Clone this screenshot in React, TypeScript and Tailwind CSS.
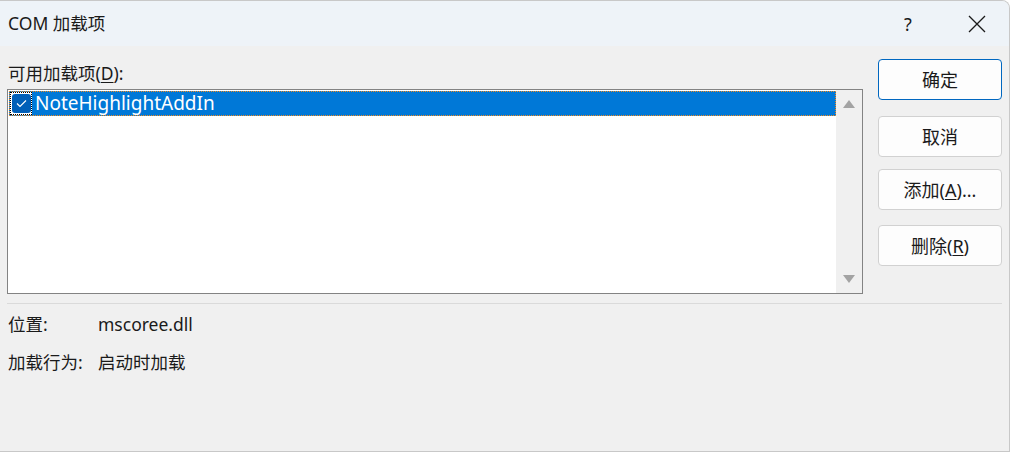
import React from "react";

const font = "font-['Segoe_UI','Noto_Sans','Noto_Sans_CJK_SC',sans-serif]";

const DlgButton = ({ label, primary }: { label: React.ReactNode; primary?: boolean }) => (
  <button
    className={`w-[124px] h-[41px] rounded-[4px] bg-[#fdfdfd] text-[18px] leading-none text-[#1a1a1a] border ${
      primary ? "border-[#0067c0]" : "border-[#d1d1d1]"
    }`}
  >
    {label}
  </button>
);

const App = () => {
  return (
    <div className={`w-[1010px] h-[452px] bg-[#f0f0f0] ${font} text-[#1a1a1a] flex flex-col border-t border-r border-b border-[#c8c8c8] rounded-tr-[8px] overflow-hidden`}>
      {/* title bar */}
      <div className="h-[45px] bg-[#eef3f8] flex items-center shrink-0">
        <span className="ml-[8px] text-[17.5px] leading-none flex-1">COM 加载项</span>
        <span className="w-[20px] text-center text-[18px] leading-none mr-[50px]">?</span>
        <svg width="18" height="18" viewBox="0 0 18 18" className="mr-[23px]">
          <path d="M1 1 L17 17 M17 1 L1 17" stroke="#1a1a1a" strokeWidth="1.3" />
        </svg>
      </div>

      <div className="flex px-[7px] pt-[15px]">
        <div className="flex flex-col w-[856px]">
          <div className="text-[17.5px] ml-[1px] h-[28px] leading-[24px]">
            可用加载项(<span className="underline underline-offset-2">D</span>):
          </div>
          <div className="h-[205px] border border-[#838383] bg-white flex">
            <div className="flex-1 pt-[1px] pl-[1px]">
              <div className="h-[25px] bg-[#0078d7] flex items-center outline-1 outline-dotted outline-[#f28b20] -outline-offset-1">
                <div className="w-[22px] h-[23px] ml-[1px] border border-dotted border-black bg-white flex items-center justify-center">
                  <div className="w-[19px] h-[19px] rounded-[3px] bg-[#005fb8] flex items-center justify-center">
                    <svg width="11" height="9" viewBox="0 0 11 9">
                      <path d="M1 4.5 L4 7.5 L10 1.5" fill="none" stroke="white" strokeWidth="1.1" />
                    </svg>
                  </div>
                </div>
                <span className="ml-[3px] text-white text-[19px] leading-none">NoteHighlightAddIn</span>
              </div>
            </div>
            <div className="w-[26px] bg-[#f0f0f0] flex flex-col items-center justify-between py-[10px]">
              <svg width="12" height="8" viewBox="0 0 12 8">
                <path d="M6 0 L12 8 L0 8 Z" fill="#a3a3a3" />
              </svg>
              <svg width="12" height="8" viewBox="0 0 12 8">
                <path d="M0 0 L12 0 L6 8 Z" fill="#a3a3a3" />
              </svg>
            </div>
          </div>
        </div>
        <div className="flex flex-col ml-[15px] gap-[16px] -mt-[2px]">
          <DlgButton label="确定" primary />
          <DlgButton label="取消" />
          <div className="-mt-[4px]">
            <DlgButton label={<>添加(<span className="underline underline-offset-2">A</span>)...</>} />
          </div>
          <div className="-mt-[1px]">
            <DlgButton label={<>删除(<span className="underline underline-offset-2">R</span>)</>} />
          </div>
        </div>
      </div>

      <div className="mx-[7px] mt-[9px] h-px bg-[#dadada]" />

      <div className="px-[8px] pt-[9px] text-[17.5px] flex flex-col gap-[16px]">
        <div className="flex h-[22px] items-center">
          <span className="w-[90px]">位置:</span>
          <span>mscoree.dll</span>
        </div>
        <div className="flex h-[22px] items-center">
          <span className="w-[90px]">加载行为:</span>
          <span>启动时加载</span>
        </div>
      </div>
    </div>
  );
};

export default App;
